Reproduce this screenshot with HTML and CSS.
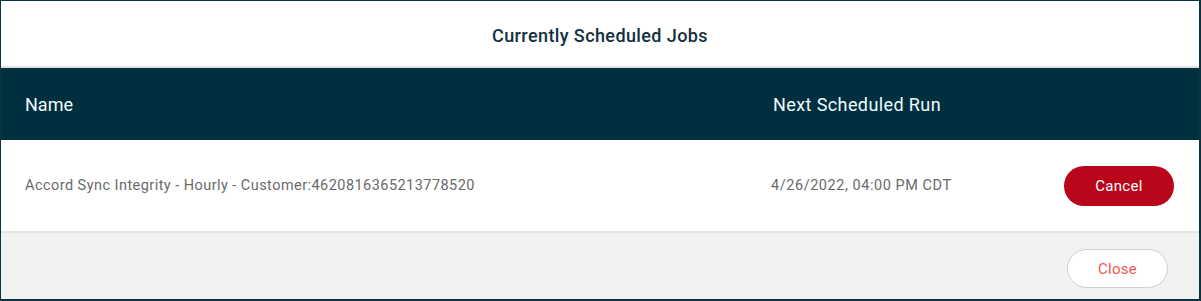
FILE: index.html
```html
<!DOCTYPE html>
<html lang="en">
<head>
<meta charset="utf-8">
<title>Currently Scheduled Jobs</title>
<link rel="stylesheet" href="styles.css">
</head>
<body>
<div class="modal">
  <div class="modal-title">Currently Scheduled Jobs</div>
  <div class="table">
    <div class="row head">
      <div class="cell name">Name</div>
      <div class="cell next">Next Scheduled Run</div>
      <div class="cell action"></div>
    </div>
    <div class="row body">
      <div class="cell name">Accord Sync Integrity - Hourly - Customer:4620816365213778520</div>
      <div class="cell next date">4/26/2022, 04:00 PM CDT</div>
      <div class="cell action"><button class="btn-cancel">Cancel</button></div>
    </div>
  </div>
  <div class="modal-footer">
    <button class="btn-close">Close</button>
  </div>
</div>
</body>
</html>
```

FILE: styles.css
```css
* { box-sizing: border-box; }
html, body { margin: 0; padding: 0; background: #ffffff; }
body { font-family: Roboto, "Liberation Sans", sans-serif; }

.modal {
  width: 1201px;
  height: 301px;
  border-style: solid;
  border-color: #0b3443;
  border-width: 1px 2px 2px 1px;
  display: flex;
  flex-direction: column;
  background: #ffffff;
}

.modal-title {
  height: 67px;
  display: flex;
  align-items: center;
  justify-content: center;
  font-size: 18px;
  font-weight: 500;
  letter-spacing: 0.4px;
  color: #12303d;
  border-bottom: 2px solid #dfe2e3;
  padding-top: 4px;
}

.row {
  display: grid;
  grid-template-columns: 748px 1fr 140px;
  align-items: center;
  padding: 0 25px 0 24px;
}

.row.head {
  height: 72px;
  background: #003040;
  color: #f2fbff;
  font-size: 18px;
  letter-spacing: 0.4px;
}

.row.head .name { letter-spacing: 0; }

.row.body {
  height: 93px;
  color: #6a6a6a;
  font-size: 14.5px;
  letter-spacing: 0.45px;
  border-bottom: 2px solid #e3e3e3;
}

.row.body .date {
  margin-left: -2px;
  letter-spacing: 0.55px;
}

.cell.action {
  display: flex;
  justify-content: flex-end;
}

.btn-cancel {
  width: 110px;
  height: 40px;
  border: none;
  border-radius: 20px;
  background: #b9061a;
  color: #ffffff;
  font-family: inherit;
  font-size: 15px;
  letter-spacing: 0.3px;
  cursor: pointer;
}

.modal-footer {
  flex: 1;
  background: #f2f2f2;
  display: flex;
  align-items: center;
  justify-content: flex-end;
  padding: 5px 31px 0 0;
}

.btn-close {
  width: 101px;
  height: 39px;
  border: 1px solid #cfcfcf;
  border-radius: 20px;
  background: #ffffff;
  color: #f5564f;
  font-family: inherit;
  font-size: 15px;
  letter-spacing: 0.3px;
  cursor: pointer;
}
```
